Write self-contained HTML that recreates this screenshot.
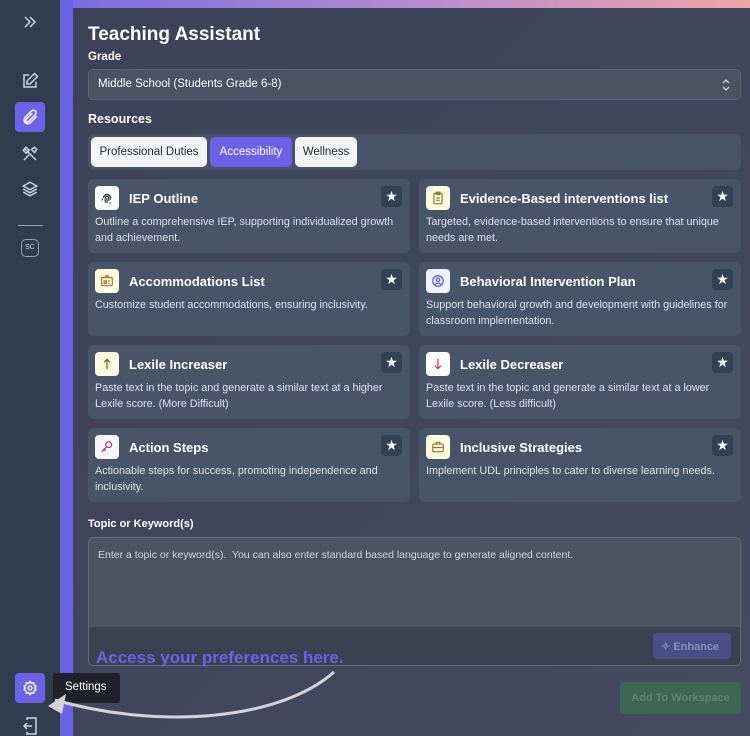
<!DOCTYPE html>
<html><head><style>
*{box-sizing:border-box;margin:0;padding:0}
body{width:750px;height:736px;overflow:hidden;background:#3e4357;font-family:"Liberation Sans",sans-serif;position:relative}
.side{position:absolute;left:0;top:0;width:60px;height:736px;background:#313c4e}
.strip{position:absolute;left:60px;top:0;width:13px;height:736px;background:#6b62e6}
.top{position:absolute;left:73px;top:0;width:677px;height:8px;background:linear-gradient(90deg,#7a6de0,#b58bd0 50%,#f0a4a8)}
.main{position:absolute;left:73px;top:8px;width:677px;height:728px;background:linear-gradient(135deg,#3c4257,#454a60);border-top-left-radius:8px}
.abs{position:absolute}
h1{position:absolute;left:88px;top:24px;font-size:19px;color:#fff;font-weight:bold}
.lbl{position:absolute;font-size:11.5px;color:#fff;font-weight:bold}
.sel{position:absolute;left:88px;top:69px;width:653px;height:31px;background:#4a5264;border:1px solid #5b6375;border-radius:5px;color:#fff;font-size:11.5px;padding:8px 9px}
.tabs{position:absolute;left:88px;top:134px;width:653px;height:36px;background:#475367;border-radius:6px}
.tab{position:absolute;top:3px;height:30px;border-radius:5px;background:#f3f4f6;color:#1f2937;font-size:11.5px;padding:9px 0;text-align:center;white-space:nowrap}
.card{position:absolute;width:322px;height:74px;background:#485569;border-radius:6px}
.ic{position:absolute;left:7px;top:7px;width:24px;height:24px;border-radius:4px;display:flex;align-items:center;justify-content:center}
.ct{position:absolute;left:41px;top:12px;color:#fff;font-size:13px;font-weight:bold}
.cd{position:absolute;left:7px;top:35px;right:6px;color:#dde2ea;font-size:10.8px;line-height:16px}
.st{position:absolute;right:8px;top:7px;width:21px;height:21px;border-radius:4px;background:#334155;color:#fff;font-size:14px;text-align:center;line-height:21px}
.ta{position:absolute;left:88px;top:537px;width:653px;height:129px;background:#4c5464;border:1px solid #636b7a;border-radius:5px;overflow:hidden}
.sico{position:absolute;left:15px;width:30px;height:30px;color:#cbd5e1;display:flex;align-items:center;justify-content:center}
</style></head><body>
<div class="side"></div>
<div class="strip"></div>
<div class="top"></div>
<div class="main"></div>

<svg class="abs" style="left:23px;top:15px" width="14" height="14" viewBox="0 0 14 14" fill="none" stroke="#cbd5e1" stroke-width="1.5"><path d="M2 2l5 5-5 5M7 2l5 5-5 5"/></svg>
<div class="sico" style="top:66px"><svg width="18" height="18" viewBox="0 0 24 24" fill="none" stroke="#cbd5e1" stroke-width="2"><path d="M11 4H4v16h16v-7"/><path d="M18 2l4 4-10 10H8v-4z"/></svg></div>
<div class="sico" style="top:102px;background:#6b62e6;border-radius:4px"><svg width="18" height="18" viewBox="0 0 24 24" fill="none" stroke="#fff" stroke-width="2"><path d="M21 11l-9 9a5 5 0 01-7-7l9-9a3.5 3.5 0 015 5l-9 9a2 2 0 01-3-3l8-8"/></svg></div>
<div class="sico" style="top:139px"><svg width="18" height="18" viewBox="0 0 24 24" fill="none" stroke="#cbd5e1" stroke-width="2"><path d="M4 4l16 16M14 6l4-3 3 3-3 4zM4 20l7-7M3 7l4-4 4 4-4 4z"/></svg></div>
<div class="sico" style="top:174px"><svg width="18" height="18" viewBox="0 0 24 24" fill="none" stroke="#cbd5e1" stroke-width="2"><path d="M12 3l9 5-9 5-9-5zM3 12l9 5 9-5M3 16l9 5 9-5"/></svg></div>
<div class="abs" style="left:18px;top:225px;width:25px;height:1px;background:#94a3b8"></div>
<div class="abs" style="left:21px;top:239px;width:18px;height:18px;border:1px solid #94a3b8;border-radius:5px;color:#cbd5e1;font-size:7px;text-align:center;line-height:16px">SC</div>

<h1>Teaching Assistant</h1>
<div class="lbl" style="left:88px;top:51px">Grade</div>
<div class="sel">Middle School (Students Grade 6-8)<svg style="position:absolute;right:10px;top:8px" width="8" height="14" viewBox="0 0 8 14" fill="none" stroke="#cbd5e1" stroke-width="1.3"><path d="M1 5l3-3 3 3M1 9l3 3 3-3"/></svg></div>
<div class="lbl" style="left:88px;top:112px;font-size:12.5px">Resources</div>
<div class="tabs">
<div class="tab" style="left:3px;width:116px">Professional Duties</div>
<div class="tab" style="left:122px;width:82px;background:#6b62e6;color:#fff">Accessibility</div>
<div class="tab" style="left:207px;width:62px">Wellness</div>
</div>

<div class="card" style="left:88px;top:179px"><div class="ic" style="background:#f8fafc"><svg width="14" height="14" viewBox="0 0 24 24" fill="none" stroke="#333" stroke-width="2"><path d="M6 12a6 6 0 0112 0v3M9 20v-8a3 3 0 016 0v5M12 12v9M4 16v-3M17 21v-2"/></svg></div><div class="ct">IEP Outline</div><div class="st">★</div><div class="cd">Outline a comprehensive IEP, supporting individualized growth and achievement.</div></div>
<div class="card" style="left:419px;top:179px"><div class="ic" style="background:#fdfbe0"><svg width="14" height="14" viewBox="0 0 24 24" fill="none" stroke="#8a7a20" stroke-width="2"><rect x="5" y="4" width="14" height="18" rx="2"/><rect x="9" y="2" width="6" height="4"/><path d="M9 12h6M9 16h6"/></svg></div><div class="ct">Evidence-Based interventions list</div><div class="st">★</div><div class="cd">Targeted, evidence-based interventions to ensure that unique needs are met.</div></div>
<div class="card" style="left:88px;top:262px"><div class="ic" style="background:#fdfbe0"><svg width="14" height="14" viewBox="0 0 24 24" fill="none" stroke="#a0702a" stroke-width="2"><rect x="3" y="6" width="18" height="14" rx="2"/><path d="M10 6V3h4v3M7 12h4v4H7zM14 12h3M14 16h3"/></svg></div><div class="ct">Accommodations List</div><div class="st">★</div><div class="cd">Customize student accommodations, ensuring inclusivity.</div></div>
<div class="card" style="left:419px;top:262px"><div class="ic" style="background:#f0f2fd"><svg width="14" height="14" viewBox="0 0 24 24" fill="none" stroke="#5b50d6" stroke-width="2"><circle cx="12" cy="12" r="9"/><circle cx="12" cy="10" r="3"/><path d="M7 18c2-3 8-3 10 0"/></svg></div><div class="ct">Behavioral Intervention Plan</div><div class="st">★</div><div class="cd">Support behavioral growth and development with guidelines for classroom implementation.</div></div>
<div class="card" style="left:88px;top:345px"><div class="ic" style="background:#fdfbe0"><svg width="14" height="14" viewBox="0 0 24 24" fill="none" stroke="#6b5a10" stroke-width="2"><path d="M12 21V4M7 9l5-5 5 5"/></svg></div><div class="ct">Lexile Increaser</div><div class="st">★</div><div class="cd">Paste text in the topic and generate a similar text at a higher Lexile score. (More Difficult)</div></div>
<div class="card" style="left:419px;top:345px"><div class="ic" style="background:#fff"><svg width="14" height="14" viewBox="0 0 24 24" fill="none" stroke="#c0267a" stroke-width="2"><path d="M12 3v17M7 15l5 5 5-5"/></svg></div><div class="ct">Lexile Decreaser</div><div class="st">★</div><div class="cd">Paste text in the topic and generate a similar text at a lower Lexile score. (Less difficult)</div></div>
<div class="card" style="left:88px;top:428px"><div class="ic" style="background:#f8f6fb"><svg width="14" height="14" viewBox="0 0 24 24" fill="none" stroke="#c0267a" stroke-width="2"><circle cx="15" cy="8" r="5"/><path d="M11 12l-8 8M6 17l2 2M8 15l2 2"/></svg></div><div class="ct">Action Steps</div><div class="st">★</div><div class="cd">Actionable steps for success, promoting independence and inclusivity.</div></div>
<div class="card" style="left:419px;top:428px"><div class="ic" style="background:#fdfbe0"><svg width="14" height="14" viewBox="0 0 24 24" fill="none" stroke="#a0702a" stroke-width="2"><rect x="3" y="7" width="18" height="13" rx="2"/><path d="M9 7V4h6v3M3 13h18"/></svg></div><div class="ct">Inclusive Strategies</div><div class="st">★</div><div class="cd">Implement UDL principles to cater to diverse learning needs.</div></div>

<div class="lbl" style="left:88px;top:518px;font-size:11px">Topic or Keyword(s)</div>
<div class="ta">
<div class="abs" style="left:9px;top:11px;color:#d1d5db;font-size:10.5px">Enter a topic or keyword(s).&nbsp; You can also enter standard based language to generate aligned content.</div>
<div class="abs" style="left:0;top:89px;width:100%;height:40px;background:#3a4252"></div>
<div class="abs" style="left:564px;top:95px;width:78px;height:26px;background:#4a4f8a;border-radius:4px;color:#8a8fb5;font-size:11px;font-weight:bold;padding:7px 8px">✧ Enhance</div>
</div>
<div class="abs" style="left:96px;top:648px;color:#6b62e6;font-size:17px;font-weight:bold">Access your preferences here.</div>
<div class="abs" style="left:620px;top:682px;width:121px;height:32px;background:#3d6657;border-radius:4px;color:#5a8672;font-size:11px;font-weight:bold;text-align:center;line-height:32px">Add To Workspace</div>

<div class="sico" style="top:673px;background:#6b62e6;border-radius:4px"><svg width="16" height="16" viewBox="0 0 24 24" fill="none" stroke="#fff" stroke-width="2"><circle cx="12" cy="12" r="3"/><path d="M12 2l2 3 3.5-1 .5 3.5 3 2-2 2.5 2 2.5-3 2-.5 3.5-3.5-1-2 3-2-3-3.5 1-.5-3.5-3-2 2-2.5-2-2.5 3-2L6.5 4 10 5z"/></svg></div>
<div class="abs" style="left:53px;top:673px;width:67px;height:30px;background:#1f2329;border-radius:3px;color:#fff;font-size:11.5px;padding:8px 12px">Settings</div>
<svg class="abs" style="left:22px;top:716px" width="16" height="20" viewBox="0 0 16 20" fill="none" stroke="#cbd5e1" stroke-width="1.5"><path d="M5 4V2h9v16H5v-2M10 10H2M5 7l-3 3 3 3"/></svg>
<svg class="abs" style="left:0;top:0" width="750" height="736"><path d="M334 672 C280 720 160 730 55 700" fill="none" stroke="#d4d4d8" stroke-width="3"/><path d="M48 706 L66 694 L62 714 Z" fill="#d4d4d8"/></svg>
</body></html>
